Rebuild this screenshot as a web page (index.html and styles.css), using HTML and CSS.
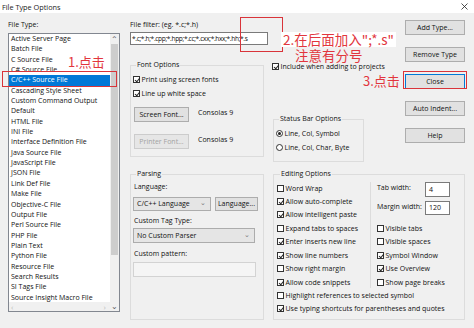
FILE: index.html
```html
<!DOCTYPE html>
<html>
<head>
<meta charset="utf-8">
<link rel="stylesheet" href="styles.css">
</head>
<body>
<div class="window">
  <div class="titlebar">
    <span>File Type Options</span>
    <svg class="close-x" width="7" height="7" viewBox="0 0 7 7"><path d="M0.5 0.5L6.5 6.5M6.5 0.5L0.5 6.5" stroke="#222" stroke-width="0.8"/></svg>
  </div>
  <div class="content">
    <div class="col-list">
      <div class="lbl">File Type:</div>
      <div class="listbox">
        <div class="items">
          <div class="item">Active Server Page</div>
          <div class="item">Batch File</div>
          <div class="item">C Source File</div>
          <div class="item">C# Source File</div>
          <div class="item sel">C/C++ Source File</div>
          <div class="item">Cascading Style Sheet</div>
          <div class="item">Custom Command Output</div>
          <div class="item">Default</div>
          <div class="item">HTML File</div>
          <div class="item">INI File</div>
          <div class="item">Interface Definition File</div>
          <div class="item">Java Source File</div>
          <div class="item">JavaScript File</div>
          <div class="item">JSON File</div>
          <div class="item">Link Def File</div>
          <div class="item">Make File</div>
          <div class="item">Objective-C File</div>
          <div class="item">Output File</div>
          <div class="item">Perl Source File</div>
          <div class="item">PHP File</div>
          <div class="item">Plain Text</div>
          <div class="item">Python File</div>
          <div class="item">Resource File</div>
          <div class="item">Search Results</div>
          <div class="item">SI Tags File</div>
          <div class="item">Source Insight Macro File</div>
        </div>
        <div class="vscroll">
          <div class="arrow">&#8963;</div>
          <div class="thumb"></div>
          <div class="track"></div>
          <div class="arrow dn">&#8964;</div>
        </div>
        <div class="hscroll"><span>&lsaquo;</span><span>&rsaquo;</span></div>
      </div>
    </div>

    <div class="col-main">
      <div class="top">
        <div class="filter-col">
          <div class="lbl">File filter: (eg. *.c;*.h)</div>
          <div class="textbox filter">*.c;*.h;*.cpp;*.hpp;*.cc;*.cxx;*.hxx;*.hh;*.s</div>
          <div class="group font-group">
            <div class="gtitle">Font Options</div>
            <div class="cbrow first"><span class="cb on"></span>Print using screen fonts</div>
            <div class="cbrow"><span class="cb on"></span>Line up white space</div>
            <div class="fontrow r1"><div class="btn fbtn">Screen Font...</div><span class="fname">Consolas 9</span></div>
            <div class="fontrow r2"><div class="btn fbtn disabled">Printer Font...</div><span class="fname">Consolas 9</span></div>
          </div>
        </div>
        <div class="opts-col">
          <div class="cbrow include"><span class="cb on"></span>Include when adding to projects</div>
          <div class="group status-group">
            <div class="gtitle">Status Bar Options</div>
            <div class="cbrow first"><span class="rb on"></span>Line, Col, Symbol</div>
            <div class="cbrow"><span class="rb"></span>Line, Col, Char, Byte</div>
          </div>
        </div>
        <div class="btn-col">
          <div class="btn">Add Type...</div>
          <div class="btn">Remove Type</div>
          <div class="btn default">Close</div>
          <div class="btn">Auto Indent...</div>
          <div class="btn">Help</div>
        </div>
      </div>
      <div class="bottom">
        <div class="group parse-group">
          <div class="gtitle">Parsing</div>
          <div class="lbl plbl l1">Language:</div>
          <div class="prow">
            <div class="combo lang">C/C++ Language<span class="chev">&#8964;</span></div>
            <div class="btn langbtn">Language...</div>
          </div>
          <div class="lbl plbl l2">Custom Tag Type:</div>
          <div class="combo parser">No Custom Parser<span class="chev">&#8964;</span></div>
          <div class="lbl plbl l3">Custom pattern:</div>
          <div class="textbox pattern"></div>
        </div>
        <div class="group edit-group">
          <div class="gtitle">Editing Options</div>
          <div class="egrid">
            <div class="cbrow"><span class="cb"></span>Word Wrap</div>
            <div class="cbrow"><span class="cb on"></span>Allow auto-complete</div>
            <div class="cbrow"><span class="cb on"></span>Allow intelligent paste</div>
            <div class="cbrow"><span class="cb"></span>Expand tabs to spaces</div>
            <div class="cbrow"><span class="cb on"></span>Enter inserts new line</div>
            <div class="cbrow"><span class="cb on"></span>Show line numbers</div>
            <div class="cbrow"><span class="cb"></span>Show right margin</div>
            <div class="cbrow"><span class="cb on"></span>Allow code snippets</div>
            <div class="cbrow wide r9"><span class="cb"></span>Highlight references to selected symbol</div>
            <div class="cbrow wide r10"><span class="cb on"></span>Use typing shortcuts for parentheses and quotes</div>
            <div class="divider"></div>
            <div class="widths">
              <div class="wrow"><span class="wl">Tab width:</span><div class="textbox num">4</div></div>
              <div class="wrow"><span class="wl">Margin width:</span><div class="textbox num">120</div></div>
            </div>
            <div class="cbrow rc r4"><span class="cb"></span>Visible tabs</div>
            <div class="cbrow rc r5"><span class="cb"></span>Visible spaces</div>
            <div class="cbrow rc r6"><span class="cb on"></span>Symbol Window</div>
            <div class="cbrow rc r7"><span class="cb on"></span>Use Overview</div>
            <div class="cbrow rc r8"><span class="cb"></span>Show page breaks</div>
          </div>
        </div>
      </div>
    </div>
  </div>

  <div class="mark box1"></div>
  <div class="note n1">1.点击</div>
  <div class="mark box2"></div>
  <div class="note n2">2.在后面加入";*.s"</div>
  <div class="note n3">注意有分号</div>
  <div class="note n4">3.点击</div>
  <div class="mark box3"></div>
</div>
</body>
</html>
```

FILE: styles.css
```css
* { box-sizing: border-box; margin: 0; padding: 0; }

body {
  margin: 0;
  width: 474px;
  height: 328px;
  overflow: hidden;
  background: #f0f0f0;
  font-family: "Open Sans", "Noto Sans", sans-serif;
  font-size: 7px;
  color: #111;
}

.window { position: relative; width: 474px; height: 328px; }

.titlebar {
  height: 13px;
  background: #fff;
  display: flex;
  justify-content: space-between;
  align-items: center;
  padding: 0 6px 0 2px;
  font-size: 7.3px;
  color: #222;
}

.content {
  display: flex;
  padding: 7px 8px 0 8px;
  height: 315px;
}

.lbl { height: 10px; line-height: 10px; white-space: nowrap; }

/* list */
.col-list { width: 112px; display: flex; flex-direction: column; }
.listbox {
  margin-top: 3px;
  height: 279px;
  border: 1px solid #828790;
  background: #fff;
  display: grid;
  grid-template-columns: 1fr 9px;
  grid-template-rows: 1fr 9px;
}
.items { overflow: hidden; }
.item { height: 10.35px; line-height: 10.35px; padding-left: 2px; white-space: nowrap; }
.item.sel { background: #0078d7; color: #fff; }
.vscroll {
  grid-row: 1 / 3;
  grid-column: 2;
  display: flex;
  flex-direction: column;
  background: #f0f0f0;
}
.arrow { height: 10px; line-height: 10px; text-align: center; color: #606060; font-size: 8px; }
.arrow.dn { height: 8px; line-height: 6px; }
.thumb { height: 211px; background: #cdcdcd; margin: 0 1px; }
.track { flex: 1; }
.hscroll {
  display: flex;
  justify-content: space-between;
  align-items: center;
  padding: 0 4px 0 2px;
  background: #f0f0f0;
  color: #bdbdbd;
  font-size: 8px;
  line-height: 9px;
}

/* main */
.col-main { margin-left: 10px; width: 336px; display: flex; flex-direction: column; }
.top { display: flex; height: 154px; }
.filter-col { width: 134px; }

.textbox {
  background: #fff;
  border: 1px solid #7a7a7a;
  white-space: nowrap;
  overflow: hidden;
}
.filter {
  margin-top: 2px;
  width: 138px;
  height: 13px;
  line-height: 11px;
  padding-left: 1px;
  font-size: 6.6px;
  letter-spacing: -0.35px;
}

.group { border: 1px solid #dcdcdc; }
.gtitle {
  margin: -6px 0 0 3px;
  padding: 0 1px;
  width: fit-content;
  height: 10px;
  line-height: 10px;
  background: #f0f0f0;
}

.cbrow {
  height: 13.4px;
  display: flex;
  align-items: center;
  white-space: nowrap;
}
.cb, .rb {
  width: 7px;
  height: 7px;
  border: 1px solid #333;
  background: #fff;
  margin-right: 1.5px;
  flex: none;
  position: relative;
}
.cb.on::after {
  content: "";
  position: absolute;
  left: 1.5px;
  top: 0px;
  width: 2px;
  height: 3.6px;
  border-right: 1px solid #222;
  border-bottom: 1px solid #222;
  transform: rotate(40deg);
}
.rb { border-radius: 50%; }
.rb.on::after {
  content: "";
  position: absolute;
  left: 1px;
  top: 1px;
  width: 3px;
  height: 3px;
  border-radius: 50%;
  background: #222;
}

.font-group { margin-top: 20px; height: 92px; padding-left: 2px; }
.font-group .cbrow.first { margin-top: 3px; }
.fontrow { display: flex; align-items: flex-start; }
.fontrow.r1 { margin-top: 7px; }
.fontrow.r2 { margin-top: 12px; }
.fname { margin-left: 9px; padding-top: 1px; line-height: 10px; }

.btn {
  background: #e1e1e1;
  border: 1px solid #adadad;
  height: 15px;
  line-height: 13px;
  text-align: center;
  white-space: nowrap;
}
.btn.default { border-color: #0078d7; }
.fbtn { width: 55px; margin-left: 1px; }
.btn.disabled { color: #a3a3a3; background: #e6e6e6; border-color: #cccccc; }

.opts-col { margin-left: 8px; width: 128px; }
.include { margin-top: 40.3px; }
.status-group { margin-top: 45.3px; margin-left: 1px; width: 91px; height: 43px; padding-left: 2px; }
.status-group .cbrow.first { margin-top: 3.3px; }

.btn-col {
  margin-left: 5px;
  width: 60px;
  display: flex;
  flex-direction: column;
  gap: 12px;
}

.bottom { display: flex; height: 146px; }
.parse-group { width: 134px; height: 146px; padding-left: 2px; }
.plbl { padding-left: 1px; }
.plbl.l1 { margin-top: 3px; }
.prow { display: flex; gap: 4px; margin-top: 5px; }
.combo {
  background: #e5e5e5;
  border: 1px solid #acacac;
  height: 14px;
  line-height: 12px;
  padding-left: 3px;
  position: relative;
  white-space: nowrap;
}
.chev { position: absolute; right: 4px; top: -1px; color: #777; font-size: 7px; }
.combo.lang { width: 78px; }
.langbtn { width: 43px; height: 14px; line-height: 12px; }
.plbl.l2 { margin-top: 5px; }
.combo.parser { margin-top: 2px; width: 122px; height: 15px; line-height: 13px; }
.plbl.l3 { margin-top: 6px; }
.pattern { margin-top: 3px; width: 123px; height: 15px; background: #f5f5f5; border-color: #d3d3d3; }

.edit-group { margin-left: 9px; width: 192px; height: 146px; padding-left: 3px; }
.egrid {
  margin-top: 2.3px;
  display: grid;
  grid-template-columns: 93px 1px 1fr;
  grid-template-rows: repeat(10, 13.44px);
  grid-auto-flow: column;
}
.egrid > .cbrow { grid-column: 1; height: auto; }
.egrid > .cbrow.wide { grid-column: 1 / 4; }
.egrid > .r9 { grid-row: 9; }
.egrid > .r10 { grid-row: 10; }
.egrid > .cbrow.rc { grid-column: 3; padding-left: 6px; }
.egrid > .r4 { grid-row: 4; }
.egrid > .r5 { grid-row: 5; }
.egrid > .r6 { grid-row: 6; }
.egrid > .r7 { grid-row: 7; }
.egrid > .r8 { grid-row: 8; }
.divider { grid-column: 2; grid-row: 1 / 9; background: #dcdcdc; margin: 1px 0; }
.widths {
  grid-column: 3;
  grid-row: 1 / 4;
  padding: 0.7px 0 0 6px;
  display: flex;
  flex-direction: column;
  gap: 4px;
}
.wrow { display: flex; align-items: flex-start; }
.wl { width: 48px; margin-top: 1px; line-height: 10px; white-space: nowrap; }
.num { width: 25px; height: 15px; line-height: 13px; padding-left: 3px; }
.wrow + .wrow .num { height: 14px; line-height: 12px; }

/* annotations overlaid on the screenshot */
.mark { position: absolute; border: 1.5px solid #d9343a; }
.box1 { left: 2px; top: 71px; width: 115px; height: 16px; }
.box2 { left: 240px; top: 17px; width: 43px; height: 35px; }
.box3 { left: 403px; top: 71px; width: 64px; height: 18px; }
.note {
  position: absolute;
  font-family: "Noto Sans CJK SC", "Noto Sans", sans-serif;
  color: #e2363d;
  white-space: nowrap;
}
.n1 { left: 68px; top: 54px; font-size: 13px; line-height: 16px; }
.n2 { left: 281px; top: 32px; font-size: 13.5px; line-height: 15px; background: #fff; padding: 0 2px; }
.n3 { left: 295px; top: 49px; font-size: 13.5px; line-height: 13px; }
.n4 { left: 363px; top: 73px; font-size: 13px; line-height: 16px; }
```
